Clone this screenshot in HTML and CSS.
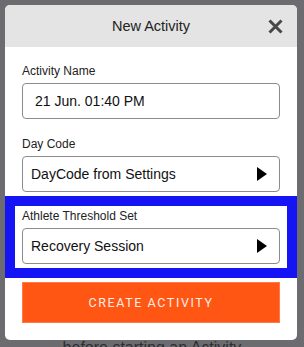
FILE: index.html
```html
<!DOCTYPE html>
<html>
<head>
<meta charset="utf-8">
<link rel="stylesheet" href="styles.css">
</head>
<body>
<div class="page">
  <p class="behind">before starting an Activity</p>
</div>
<div class="modal">
  <div class="modal-header">
    <span class="title">New Activity</span>
    <button class="close" aria-label="Close">
      <svg width="15" height="15" viewBox="0 0 15 15"><path d="M1.5 1.5 L13.5 13.5 M13.5 1.5 L1.5 13.5" stroke="#474747" stroke-width="3" stroke-linecap="butt" fill="none"/></svg>
    </button>
  </div>
  <div class="modal-body">
    <div class="field">
      <div class="label">Activity Name</div>
      <div class="input">21 Jun. 01:40 PM</div>
    </div>
    <div class="field field-gap">
      <div class="label">Day Code</div>
      <div class="select"><span>DayCode from Settings</span>
        <svg class="arrow" width="10" height="14" viewBox="0 0 10 14"><polygon points="0,0 10,7 0,14" fill="#000"/></svg>
      </div>
    </div>
    <div class="field highlight">
      <div class="label">Athlete Threshold Set</div>
      <div class="select"><span>Recovery Session</span>
        <svg class="arrow" width="10" height="14" viewBox="0 0 10 14"><polygon points="0,0 10,7 0,14" fill="#000"/></svg>
      </div>
    </div>
    <div class="actions">
      <button class="create">CREATE ACTIVITY</button>
    </div>
  </div>
</div>
</body>
</html>
```
FILE: styles.css
```css
html, body {
  margin: 0;
  padding: 0;
}
body {
  width: 304px;
  height: 347px;
  overflow: hidden;
  background: #6c6c70;
  font-family: "Liberation Sans", Arial, sans-serif;
  position: relative;
}
.page {
  padding-top: 339px;
}
.behind {
  margin: 0;
  text-align: center;
  font-size: 16px;
  line-height: 18px;
  color: #2e2e30;
}
.modal {
  position: absolute;
  left: 5px;
  top: 5px;
  width: 292px;
  height: 335px;
  background: #fff;
  border-radius: 5px;
  overflow: hidden;
}
.modal-header {
  height: 42px;
  background: #e4e4e4;
  display: flex;
  align-items: center;
  justify-content: center;
  position: relative;
}
.title {
  font-size: 14.5px;
  color: #222;
}
.close {
  position: absolute;
  right: 14px;
  top: 14px;
  width: 15px;
  height: 15px;
  padding: 0;
  border: 0;
  background: none;
  display: block;
}
.close svg {
  display: block;
}
.modal-body {
  padding-top: 17px;
}
.field {
  padding: 0 17px;
}
.field-gap {
  margin-top: 18px;
}
.label {
  font-size: 12px;
  line-height: 14px;
  color: #222;
  margin-bottom: 5px;
}
.input, .select {
  box-sizing: border-box;
  height: 36px;
  border: 1px solid #8c8c8c;
  border-radius: 4px;
  font-size: 14px;
  color: #111;
  display: flex;
  align-items: center;
}
.input {
  padding-left: 12px;
}
.select {
  padding: 0 12px 0 8px;
  justify-content: space-between;
}
.arrow {
  display: block;
}
.highlight {
  margin-top: 4px;
  border: 10px solid #1414f4;
  padding: 3px 7px 4px;
}
.actions {
  padding: 4px 17px 0;
}
.create {
  display: block;
  width: 100%;
  height: 41px;
  border: 1px solid #ff7a48;
  background: #ff5614;
  color: #fdeee7;
  font-family: Roboto, "Liberation Sans", sans-serif;
  font-size: 12.5px;
  letter-spacing: 1.6px;
  padding: 0;
}
```
